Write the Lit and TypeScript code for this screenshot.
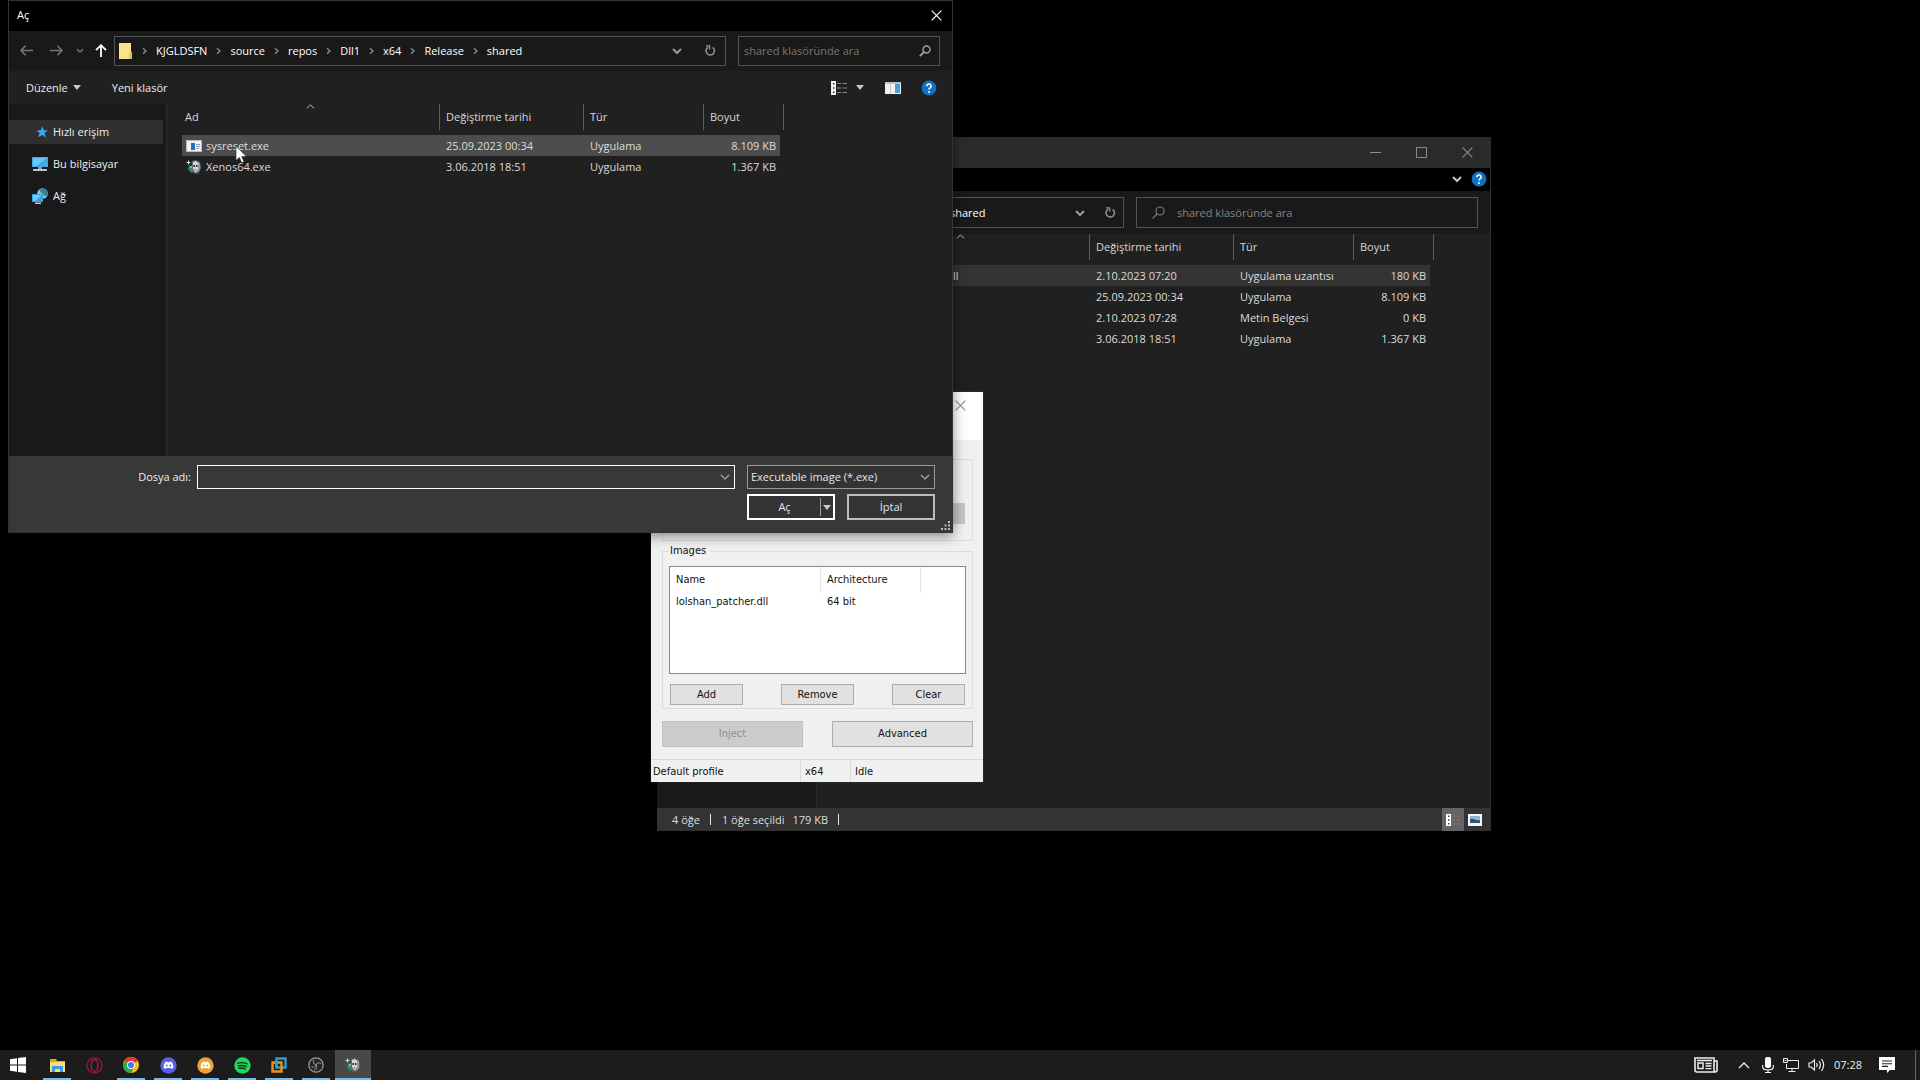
import { LitElement, html, css } from "lit";
import { customElement, property } from "lit/decorators.js";
import { classMap } from "lit/directives/class-map.js";

const base = css`
  * { box-sizing: border-box; }
  :host {
    font-family: "Open Sans", "Noto Sans", sans-serif;
    font-size: 11px;
    line-height: 16px;
    color: #e6e6e6;
  }
  button, input, select { font: inherit; color: inherit; margin: 0; padding: 0; border: 0; background: none; border-radius: 0; }
  svg { display: block; flex: none; }
`;

const chevronDown = html`<svg width="10" height="8" viewBox="0 0 10 8"><path d="M1 2l4 4 4-4" fill="none" stroke="#9a9a9a" stroke-width="2"/></svg>`;
const thinChevron = html`<svg width="10" height="8" viewBox="0 0 10 8"><path d="M1 2l4 4 4-4" fill="none" stroke="#a8a8a8" stroke-width="1.2"/></svg>`;
const crumbSep = html`<svg width="5" height="8" viewBox="0 0 5 8"><path d="M1 1.2l3 2.8-3 2.8" fill="none" stroke="#8a8a8a" stroke-width="1.4"/></svg>`;
const caretDown = html`<svg width="8" height="5" viewBox="0 0 8 5"><path d="M0 0h8L4 5z" fill="#c8c8c8"/></svg>`;
const refresh = html`<svg width="12" height="12" viewBox="0 0 12 12"><path d="M8.6 2.4A4.2 4.2 0 1 1 4 2.3" fill="none" stroke="#8f8f8f" stroke-width="1.6"/><path d="M2 .9h3.6v3.5" fill="none" stroke="#8f8f8f" stroke-width="1.4"/></svg>`;
const help = html`<svg width="16" height="16" viewBox="0 0 16 16"><circle cx="8" cy="8" r="7.4" fill="#1271c4"/><path d="M5.9 6.3a2.1 2.1 0 1 1 3.2 1.6c-.8.5-1.1.8-1.1 1.7" fill="none" stroke="#fff" stroke-width="1.6"/><circle cx="8" cy="11.9" r="1" fill="#fff"/></svg>`;
const close = (color: string) => html`<svg width="11" height="11" viewBox="0 0 11 11"><path d="M.7.7l9.6 9.6M10.3.7L.7 10.3" stroke=${color} stroke-width="1.2"/></svg>`;
const sortCaret = html`<svg width="9" height="5" viewBox="0 0 9 5"><path d="M.8 4.4L4.5.9l3.7 3.5" fill="none" stroke="#8c8c8c" stroke-width="1.1"/></svg>`;

const appIcon = html`<svg width="16" height="14" viewBox="0 0 16 14"><path d="M.5 1.500h15v11H.5z" fill="#f2f2f2" stroke="#b9bfc6"/><path d="M5 4h4v7H5z" fill="#1c70c8"/><path d="M10 5h4v1h-4zM10 7h4v1h-4zM10 9h3v1h-3z" fill="#8f99a8"/></svg>`;
const xenosIcon = html`<svg width="16" height="16" viewBox="0 0 16 16"><path d="M6 2l4-1 4 2 1 6-2 5-4 1-4-3z" fill="#5d6b70"/><path d="M7 3l3-1 2 2v6l-1 3H9L7 10z" fill="#d8d6d2"/><path d="M3 6l3 2 1 5-2 1-3-4z" fill="#338578"/><path d="M.5 3.500h4M2.500 1.500v4M4 8h2" stroke="#cfe9e6"/><path d="M12 3l2 2-.5 6-1.500 1z" fill="#8ea5ae"/><path d="M7.500 6H9v2H7.500zM10 6h1.500v2H10z" fill="#22262b"/><path d="M8.500 10.500h2v1h-2z" fill="#a04552"/></svg>`;
const starIcon = html`<svg width="12" height="12" viewBox="0 0 12 12"><path d="M6.300.3l1.500 3.900 4.100.2-3.300 2.500 1.100 4.500-3.500-2.300-3.800 2.200 1.200-4.200L.5 4.500l4.200-.3z" fill="#39a9ee"/></svg>`;
const pcIcon = html`<svg width="16" height="14" viewBox="0 0 16 14"><path d="M0 0h16v10H0z" fill="#3fa9ea"/><path d="M1 1h14L4 9H1z" fill="#6cc5f6"/><path d="M6 10h4v2H6z" fill="#8d9aa5"/><path d="M1 12h14v2H1z" fill="#b9c4cd"/></svg>`;
const netIcon = html`<svg width="16" height="16" viewBox="0 0 16 16"><circle cx="10.500" cy="5.500" r="5.300" fill="#8fc3d6"/><path d="M7 2c2 1 1 3 3 3s1 3 3 3 2-1 2.600-2A5.300 5.300 0 0 0 12 .5z" fill="#3b7d93"/><path d="M0 6h11v8H0z" fill="#36a0e4"/><path d="M1 7h9l-7 6H1z" fill="#74c9f8"/><path d="M3 14.500h6V16H3z" fill="#c3ced6"/></svg>`;
const folderIcon = html`<svg width="14" height="16" viewBox="0 0 14 16"><path d="M0 0h12v9h1v7H0z" fill="#f9e48b"/><path d="M10 11l2-3 1 2v6h-3z" fill="#dfc05c"/></svg>`;

type FileRow = { icon?: unknown; name: string; date: string; kind: string; size: string; selected?: boolean };

/** Details view shared by the file dialog and the explorer window. */
@customElement("file-table")
export class FileTable extends LitElement {
  @property({ attribute: false }) rows: FileRow[] = [];
  @property({ attribute: false }) columns: number[] = [];
  @property() heading = "Ad";

  static styles = [base, css`
    :host { display: block; }
    table { border-collapse: separate; border-spacing: 0; table-layout: fixed; }
    th { position: relative; height: 26px; padding: 0 6px; text-align: left; font-weight: 400; color: #d8d8d8; border-right: 1px solid #5c5c5c; }
    th:first-child { padding-left: 3px; }
    .sort { position: absolute; top: 0; left: 50%; margin-left: -5px; }
    .gap td { height: 5px; padding: 0; }
    td { height: 21px; padding: 0 6px; white-space: nowrap; color: #dcdcdc; }
    td:first-child { padding-left: 4px; }
    td:last-child { text-align: right; padding-right: 8px; }
    .selected td { background: var(--selected, #4d4d4d); }
    .selected td:last-child { background: linear-gradient(var(--selected, #4d4d4d), var(--selected, #4d4d4d)) 0 0 / calc(100% - 4px) 100% no-repeat; }
    .file { display: flex; align-items: center; gap: 4px; }
    .blank { width: 22px; }
  `];

  render() {
    return html`<table>
      <colgroup>${this.columns.map((w) => html`<col style="width:${w}px">`)}</colgroup>
      <thead><tr>
        <th scope="col">${this.heading}<span class="sort">${sortCaret}</span></th>
        <th scope="col">Değiştirme tarihi</th><th scope="col">Tür</th><th scope="col">Boyut</th>
      </tr></thead>
      <tbody>
        <tr class="gap"><td colspan="4"></td></tr>
        ${this.rows.map((r) => html`<tr class=${classMap({ selected: !!r.selected })}>
          <td><div class="file">${r.icon ?? html`<span class="blank"></span>`}<span>${r.name}</span></div></td>
          <td>${r.date}</td><td>${r.kind}</td><td>${r.size}</td>
        </tr>`)}
      </tbody>
    </table>`;
  }
}

@customElement("explorer-window")
export class ExplorerWindow extends LitElement {
  rows: FileRow[] = [
    { name: "lolshan_patcher.dll", date: "2.10.2023 07:20", kind: "Uygulama uzantısı", size: "180 KB", selected: true },
    { name: "", date: "25.09.2023 00:34", kind: "Uygulama", size: "8.109 KB" },
    { name: "", date: "2.10.2023 07:28", kind: "Metin Belgesi", size: "0 KB" },
    { name: "", date: "3.06.2018 18:51", kind: "Uygulama", size: "1.367 KB" },
  ];

  static styles = [base, css`
    :host { display: flex; flex-direction: column; background: #202020; border-right: 1px solid #2c2c2c; }
    .title { height: 31px; background: #2b2b2b; display: flex; justify-content: flex-end; }
    .title button { width: 46px; display: grid; place-items: center; }
    .ribbon { height: 23px; background: #000; display: flex; align-items: center; justify-content: flex-end; gap: 9px; padding: 0 3px 2px 0; }
    .nav { height: 43px; background: #191919; display: flex; align-items: center; gap: 12px; padding: 0 12px 0 120px; }
    .address { flex: 1; height: 31px; border: 1px solid #535353; display: flex; align-items: center; gap: 19px; padding: 0 7px 0 172px; color: #fff; }
    .address span { flex: 1; }
    .search { width: 342px; height: 31px; border: 1px solid #535353; display: flex; align-items: center; gap: 12px; padding-left: 15px; }
    .search input { flex: 1; min-width: 0; outline: 0; }
    .search input::placeholder { color: #858585; opacity: 1; }
    .main { flex: 1; display: flex; min-height: 0; }
    .side { width: 160px; background: #191919; border-right: 1px solid #2b2b2b; }
    file-table { margin-left: 15px; --selected: #333; }
    .status { height: 23px; background: #333; display: flex; align-items: center; padding-left: 15px; color: #dedede; }
    .bar { width: 1px; height: 11px; background: #e8e8e8; margin: 0 11px 0 10px; }
    .size { margin-left: 8px; }
    .views { margin-left: auto; display: flex; padding-right: 4px; }
    .views button { width: 22px; height: 23px; display: grid; place-items: center; }
    .views .on { background: #646464; }
  `];

  render() {
    return html`
      <div class="title">
        <button aria-label="Simge durumuna küçült"><svg width="11" height="11" viewBox="0 0 11 11"><path d="M0 5.500h11" stroke="#8c8c8c"/></svg></button>
        <button aria-label="Ekranı kapla"><svg width="11" height="11" viewBox="0 0 11 11"><path d="M.5.5h10v10H.5z" fill="none" stroke="#8c8c8c"/></svg></button>
        <button aria-label="Kapat">${close("#8c8c8c")}</button>
      </div>
      <div class="ribbon"><button aria-label="Şeridi genişlet"><svg width="10" height="8" viewBox="0 0 10 8"><path d="M1 2l4 4 4-4" fill="none" stroke="#c4c4c4" stroke-width="2"/></svg></button><button aria-label="Yardım">${help}</button></div>
      <div class="nav">
        <div class="address"><span>shared</span><button aria-label="Önceki konumlar">${chevronDown}</button><button aria-label="Yenile">${refresh}</button></div>
        <label class="search"><svg width="13" height="13" viewBox="0 0 13 13"><circle cx="8" cy="5" r="4" fill="none" stroke="#7d7d7d" stroke-width="1.1"/><path d="M5 8l-4.400 4.400" stroke="#7d7d7d" stroke-width="1.1"/></svg><input aria-label="Ara" placeholder="shared klasöründe ara"></label>
      </div>
      <div class="main"><div class="side"></div><file-table heading="" .rows=${this.rows} .columns=${[258, 144, 120, 80]}></file-table></div>
      <div class="status">
        <span>4 öğe</span><span class="bar"></span><span>1 öğe seçildi</span><span class="size">179 KB</span><span class="bar"></span>
        <div class="views">
          <button class="on" aria-label="Ayrıntılar"><svg width="14" height="14" viewBox="0 0 14 14"><path d="M0 1h5v12H0z" fill="#fff"/><path d="M2 2.500h1.500V4H2zM2 6.200h1.500v1.500H2zM2 10h1.500v1.500H2z" fill="#444"/><path d="M6 3h3M10.500 3H14M6 7h3M10.500 7H14M6 11h3M10.500 11H14" stroke="#7c7c7c"/></svg></button>
          <button aria-label="Büyük simgeler"><svg width="14" height="12" viewBox="0 0 14 12"><path d="M0 0h14v12H0z" fill="#f6f6f6"/><path d="M2 2h10v7H2z" fill="#8fb7d8"/><path d="M2 5c4-1 6 2 10 1v3H2z" fill="#31536e"/></svg></button>
        </div>
      </div>`;
  }
}

@customElement("injector-window")
export class InjectorWindow extends LitElement {
  static styles = [base, css`
    :host { display: flex; flex-direction: column; background: #f0f0f0; color: #111; font-family: "DejaVu Sans Condensed", "Noto Sans", sans-serif; font-size: 11px; line-height: 14px; box-shadow: 0 0 1px #555; }
    .title { height: 48px; background: #fff; display: flex; justify-content: flex-end; align-items: flex-start; padding: 8px 17px; }
    .body { flex: 1; padding: 19px 10px 0 11px; display: flex; flex-direction: column; }
    .process { height: 82px; border: 1px solid #dcdcdc; display: flex; justify-content: flex-end; align-items: flex-end; padding: 0 7px 16px; }
    .process button { width: 73px; height: 21px; background: #c6c6c6; }
    fieldset { margin: 3px 0 0; padding: 8px 6px 3px; border: 1px solid #dcdcdc; min-width: 0; }
    legend { padding: 0 4px 0 1px; }
    .list { height: 108px; background: #fff; border: 1px solid #828790; }
    table { border-spacing: 0; table-layout: fixed; }
    th { height: 26px; text-align: left; font-weight: 400; padding: 0 6px; border-right: 1px solid #e5e5e5; }
    td { height: 17px; padding: 0 6px; }
    .c1 { width: 151px; } .c2 { width: 100px; }
    .buttons { display: flex; justify-content: space-between; padding: 10px 1px 0; }
    .btn { width: 73px; height: 21px; background: #e1e1e1; border: 1px solid #adadad; }
    .wide { display: flex; justify-content: space-between; margin-top: 12px; }
    .wide .btn { width: 141px; height: 26px; }
    .wide .btn:disabled { background: #ccc; border-color: #c2c2c2; color: #8c8c8c; }
    .status { height: 23px; border-top: 1px solid #d9d9d9; display: flex; line-height: 24px; }
    .status span { padding-left: 4px; border-right: 1px solid #dadada; }
    .profile { width: 150px; } .status .profile { padding-left: 2px; } .arch { width: 50px; } .status .state { flex: 1; border: 0; }
  `];

  render() {
    return html`
      <div class="title"><button aria-label="Close">${close("#8d8d8d")}</button></div>
      <div class="body">
        <div class="process"><button disabled aria-label="Process"></button></div>
        <fieldset><legend>Images</legend>
          <div class="list"><table>
            <colgroup><col class="c1"><col class="c2"></colgroup>
            <thead><tr><th scope="col">Name</th><th scope="col">Architecture</th></tr></thead>
            <tbody><tr><td>lolshan_patcher.dll</td><td>64 bit</td></tr></tbody>
          </table></div>
          <div class="buttons"><button class="btn">Add</button><button class="btn">Remove</button><button class="btn">Clear</button></div>
        </fieldset>
        <div class="wide"><button class="btn" disabled>Inject</button><button class="btn">Advanced</button></div>
      </div>
      <div class="status"><span class="profile">Default profile</span><span class="arch">x64</span><span class="state">Idle</span></div>`;
  }
}

@customElement("open-dialog")
export class OpenDialog extends LitElement {
  crumbs = ["KJGLDSFN", "source", "repos", "Dll1", "x64", "Release", "shared"];
  rows: FileRow[] = [
    { icon: appIcon, name: "sysreset.exe", date: "25.09.2023 00:34", kind: "Uygulama", size: "8.109 KB", selected: true },
    { icon: xenosIcon, name: "Xenos64.exe", date: "3.06.2018 18:51", kind: "Uygulama", size: "1.367 KB" },
  ];

  static styles = [base, css`
    :host { display: flex; flex-direction: column; background: #202020; border: 1px solid #333; box-shadow: 0 3px 12px rgba(0, 0, 0, 0.45); }
    .title { height: 30px; background: #000; display: flex; align-items: center; justify-content: space-between; padding: 0 10px 2px 8px; color: #fff; }
    .nav { height: 40px; background: #191919; display: flex; align-items: center; padding: 0 12px 1px 11px; }
    .arrows { display: flex; align-items: center; width: 94px; }
    .arrows button:nth-child(2) { margin-left: 17px; }
    .arrows button:nth-child(3) { margin-left: 13px; }
    .arrows button:nth-child(4) { margin-left: 11px; }
    .address { flex: 1; height: 30px; border: 1px solid #535353; display: flex; align-items: center; padding: 0 9px 0 4px; color: #fff; }
    .crumbs { display: flex; align-items: center; gap: 9px; flex: 1; padding-left: 9px; }
    .crumbs button { white-space: nowrap; }
    .address .tools { display: flex; gap: 22px; }
    .search { width: 202px; margin-left: 12px; height: 30px; border: 1px solid #535353; display: flex; align-items: center; padding: 0 8px 0 5px; }
    .search input { flex: 1; min-width: 0; outline: 0; }
    .search input::placeholder { color: #777; opacity: 1; }
    .bar { height: 33px; display: flex; align-items: center; padding: 0 15px 0 17px; color: #eee; }
    .bar button { display: flex; align-items: center; gap: 5px; }
    .new { margin-left: 31px; }
    .right { margin-left: auto; display: flex; align-items: center; gap: 20px; }
    .right button:first-child { gap: 9px; margin-right: 1px; }
    .main { flex: 1; display: flex; min-height: 0; }
    .side { width: 158px; background: #191919; border-right: 1px solid #2d2d2d; padding: 16px 3px 0 0; display: flex; flex-direction: column; gap: 8px; }
    .side a { height: 24px; display: flex; align-items: center; gap: 5px; padding-left: 23px; color: #eee; text-decoration: none; }
    .side .on { background: #2f2f2f; }
    .slot { width: 16px; display: flex; justify-content: flex-end; }
    file-table { margin-left: 15px; }
    .foot { height: 76px; background: #383838; display: grid; grid-template-columns: 188px 538px 188px; row-gap: 5px; padding: 9px 0 0; align-content: start; position: relative; }
    .foot label { text-align: right; padding-right: 6px; line-height: 24px; color: #eee; }
    .name { height: 24px; border: 1px solid #fff; display: flex; align-items: center; padding: 0 4px; }
    .name input { flex: 1; outline: 0; }
    .type { margin-left: 12px; width: 188px; height: 24px; border: 1px solid #9a9a9a; background: #333; display: flex; align-items: center; padding-right: 4px; }
    .type select { flex: 1; appearance: none; outline: 0; padding-left: 3px; height: 22px; }
    .actions { grid-column: 3; margin-left: 12px; width: 188px; display: flex; justify-content: space-between; }
    .btn { height: 26px; width: 88px; background: #333; border: 2px solid #fff; display: flex; align-items: center; justify-content: center; }
    .cancel { border-color: #bdbdbd; }
    .split { width: 88px; height: 26px; border: 2px solid #fff; background: #333; display: flex; align-items: center; }
    .split .go { flex: 1; }
    .split .more { width: 13px; height: 18px; border-left: 1px solid #9a9a9a; display: flex; align-items: center; justify-content: flex-end; padding-right: 2px; }
    .grip { position: absolute; right: 1px; bottom: 1px; }
  `];

  render() {
    return html`
      <div class="title"><span>Aç</span><button aria-label="Kapat">${close("#fff")}</button></div>
      <div class="nav">
        <div class="arrows">
          <button aria-label="Geri"><svg width="13" height="11" viewBox="0 0 13 11"><path d="M5.500.8L1 5.500l4.500 4.700M1 5.500h12" fill="none" stroke="#777" stroke-width="1.600"/></svg></button>
          <button aria-label="İleri"><svg width="13" height="11" viewBox="0 0 13 11"><path d="M7.500.8L12 5.500l-4.500 4.700M12 5.500H0" fill="none" stroke="#777" stroke-width="1.600"/></svg></button>
          <button aria-label="Son konumlar"><svg width="8" height="6" viewBox="0 0 8 6"><path d="M1 1l3 3 3-3" fill="none" stroke="#777" stroke-width="1.500"/></svg></button>
          <button aria-label="Yukarı"><svg width="12" height="13" viewBox="0 0 12 13"><path d="M1 6.200L6 1.200l5 5M6 1.200V13" fill="none" stroke="#fff" stroke-width="1.800"/></svg></button>
        </div>
        <div class="address">${folderIcon}
          <div class="crumbs">${this.crumbs.map((c) => html`${crumbSep}<button>${c}</button>`)}</div>
          <div class="tools"><button aria-label="Önceki konumlar">${chevronDown}</button><button aria-label="Yenile">${refresh}</button></div>
        </div>
        <label class="search"><input aria-label="Ara" placeholder="shared klasöründe ara"><svg width="12" height="12" viewBox="0 0 12 12"><circle cx="7.500" cy="4.500" r="3.500" fill="none" stroke="#a0a0a0" stroke-width="1.500"/><path d="M5 7L.8 11.200" stroke="#a0a0a0" stroke-width="1.800"/></svg></label>
      </div>
      <div class="bar">
        <button>Düzenle ${caretDown}</button><button class="new">Yeni klasör</button>
        <div class="right">
          <button aria-label="Görünüm"><svg width="16" height="14" viewBox="0 0 16 14"><path d="M0 0h5v14H0z" fill="#f0f0f0"/><path d="M2 2h1.500v1.500H2zM2 6.200h1.500v1.500H2zM2 10.500h1.500V12H2z" fill="#333"/><path d="M6 2.500h4M11.500 2.500H16M6 7h4M11.500 7H16M6 11.500h4M11.500 11.500H16" stroke="#858585"/></svg>${caretDown}</button>
          <button aria-label="Önizleme"><svg width="16" height="12" viewBox="0 0 16 12"><path d="M0 0h16v12H0z" fill="#f2f2f2"/><path d="M0 0h16v2H0z" fill="#b8c4ce"/><path d="M10 2h5v9h-5z" fill="#4ba0dc"/><path d="M5 2h1v10H5z" fill="#c8c8c8"/></svg></button>
          <button aria-label="Yardım">${help}</button>
        </div>
      </div>
      <div class="main">
        <nav class="side">
          <a href="#" class="on"><span class="slot">${starIcon}</span>Hızlı erişim</a>
          <a href="#"><span class="slot">${pcIcon}</span>Bu bilgisayar</a>
          <a href="#"><span class="slot">${netIcon}</span>Ağ</a>
        </nav>
        <file-table .rows=${this.rows} .columns=${[258, 144, 120, 80]}></file-table>
      </div>
      <div class="foot">
        <label for="fname">Dosya adı:</label>
        <div class="name"><input id="fname" type="text">${thinChevron}</div>
        <div class="type"><select aria-label="Dosya türü"><option>Executable image (*.exe)</option></select>${thinChevron}</div>
        <div class="actions">
          <div class="split"><button class="go">Aç</button><button class="more" aria-label="Diğer seçenekler">${caretDown}</button></div>
          <button class="btn cancel">İptal</button>
        </div>
        <svg class="grip" width="10" height="10" viewBox="0 0 10 10"><path d="M7 0h2v2H7zM7 3.500h2v2H7zM7 7h2v2H7zM3.500 3.500h2v2h-2zM3.500 7h2v2h-2zM0 7h2v2H0z" fill="#bdbdbd"/></svg>
      </div>`;
  }
}

const discord = (bg: string) => html`<svg width="17" height="17" viewBox="0 0 17 17"><circle cx="8.500" cy="8.500" r="8.200" fill=${bg}/><path d="M5 5.400c1-.7 1.700-.8 2.300-.8l.3.600h1.800l.3-.6c.6 0 1.300.1 2.300.8 1 1.700 1.500 3.500 1.300 5.300-.8.600-1.500.9-2.300 1l-.6-1c-1.200.4-2.600.4-3.800 0l-.6 1c-.8-.1-1.500-.4-2.300-1-.2-1.800.3-3.600 1.300-5.300z" fill="#fff"/><ellipse cx="6.700" cy="8.500" rx="1" ry="1.100" fill=${bg}/><ellipse cx="10.300" cy="8.500" rx="1" ry="1.100" fill=${bg}/></svg>`;

@customElement("task-bar")
export class TaskBar extends LitElement {
  apps = [
    { name: "Dosya Gezgini", run: true, icon: html`<svg width="17" height="15" viewBox="0 0 17 15"><path d="M1 1h6l1 2h8v11H1z" fill="#d9a62f"/><path d="M1 4h15v10H1z" fill="#fbdc7b"/><path d="M3 8h11v6h-3v-3H6v3H3z" fill="#3c9ce0"/></svg>` },
    { name: "Opera GX", run: false, icon: html`<svg width="17" height="17" viewBox="0 0 17 17"><circle cx="8.500" cy="8.500" r="7.500" fill="none" stroke="#8e1736" stroke-width="1.500"/><ellipse cx="8.500" cy="8.500" rx="3.500" ry="5.800" fill="none" stroke="#a01a3c" stroke-width="1.500"/></svg>` },
    { name: "Chrome", run: true, icon: html`<svg width="16" height="16" viewBox="0 0 16 16"><circle cx="8" cy="8" r="8" fill="#fbc116"/><path d="M8 8L1.070 4A8 8 0 0 1 14.930 4z" fill="#e33b2e"/><path d="M8 8L1.070 4A8 8 0 0 0 8 16l3.500-6z" fill="#2da94f"/><circle cx="8" cy="8" r="4" fill="#fff"/><circle cx="8" cy="8" r="3.100" fill="#3f7df0"/></svg>` },
    { name: "Discord", run: true, icon: discord("#5661e8") },
    { name: "Discord Canary", run: true, icon: discord("#f2a234") },
    { name: "Spotify", run: true, icon: html`<svg width="17" height="17" viewBox="0 0 17 17"><circle cx="8.500" cy="8.500" r="8.200" fill="#20d760"/><path d="M3.800 6.200c3-.9 6.500-.7 9.400.8M4.300 8.900c2.700-.8 5.500-.5 8 .8M4.800 11.300c2.200-.6 4.500-.3 6.500.8" fill="none" stroke="#12331d" stroke-width="1.400" stroke-linecap="round"/></svg>` },
    { name: "VMware", run: true, icon: html`<svg width="16" height="16" viewBox="0 0 16 16"><path d="M5.500 1.500h9v9h-9z" fill="none" stroke="#2f9fd0" stroke-width="2.400"/><path d="M1.500 5.500h9v9h-9z" fill="none" stroke="#ea9320" stroke-width="2.400"/><path d="M5.500 4v6.500" fill="none" stroke="#2f9fd0" stroke-width="2.400"/></svg>` },
    { name: "OBS", run: true, icon: html`<svg width="16" height="16" viewBox="0 0 16 16"><circle cx="8" cy="8" r="7.200" fill="#252525" stroke="#a0a0a0" stroke-width="1.200"/><path d="M5.800 3c-1 2 0 4.300 2.200 5M13 6.500c-1.900-1.300-4.400-.8-5 1.500M6 13c2.200 0 3.600-2.600 2-5M3.500 9.500C5 11 7.500 10.400 8 8" fill="none" stroke="#a0a0a0" stroke-width="1"/></svg>` },
    { name: "Xenos", run: true, active: true, icon: xenosIcon },
  ];

  static styles = [base, css`
    :host { display: flex; align-items: stretch; background: #1c1c1c; color: #eee; }
    .start { width: 36px; display: grid; place-items: center; }
    .apps { display: flex; gap: 1px; padding-left: 3px; }
    .app { width: 36px; position: relative; display: grid; place-items: center; }
    .app.run::after { content: ""; position: absolute; left: 4px; right: 4px; bottom: 0; height: 2px; background: #76b9ed; }
    .app.active { background: #484848; }
    .app.active::after { left: 0; right: 0; }
    .tray { margin-left: auto; display: flex; align-items: center; }
    .tray button { display: block; }
    .news { margin-right: 20px; }
    .status { display: flex; align-items: center; gap: 9px; }
    .status button:nth-child(2) { margin-left: 3px; }
    .clock { margin-left: 9px; }
    .notes { margin-left: 17px; }
    .tray .show { align-self: stretch; margin-left: 20px; width: 5px; border-left: 1px solid #666; }
  `];

  render() {
    return html`
      <button class="start" aria-label="Başlat"><svg width="16" height="16" viewBox="0 0 16 16"><path d="M0 2.200l7-1v6.300H0zM8 1.100L16 0v7.500H8zM0 8.500h7v6.300l-7-1zM8 8.500h8V16l-8-1.100z" fill="#fff"/></svg></button>
      <div class="apps">${this.apps.map((a) => html`<button class=${classMap({ app: true, run: a.run, active: !!a.active })} aria-label=${a.name}>${a.icon}</button>`)}</div>
      <div class="tray">
        <button class="news" aria-label="Haberler"><svg width="24" height="16" viewBox="0 0 24 16"><path d="M1 1h19v14H3c-1.500 0-2-1-2-2zM20 4h3v9c0 1.500-1 2-2 2h-3" fill="none" stroke="#eee" stroke-width="1.600"/><path d="M4 6h5v5.500H4z" fill="none" stroke="#eee" stroke-width="1.500"/><path d="M3 3.500h15M11.500 6.500h6M11.500 9h6M11.500 11.700h6" stroke="#eee" stroke-width="1.300"/></svg></button>
        <div class="status">
          <button aria-label="Gizli simgeler"><svg width="12" height="8" viewBox="0 0 12 8"><path d="M1 7l5-5 5 5" fill="none" stroke="#eee" stroke-width="1.400"/></svg></button>
          <button aria-label="Mikrofon"><svg width="12" height="16" viewBox="0 0 12 16"><rect x="3" y="0" width="6" height="11" rx="2" fill="#fff"/><path d="M.7 8v1.500c0 2 1.500 3.300 3.300 3.300h4c1.800 0 3.300-1.300 3.300-3.300V8M6 13v3M3 15.500h6" fill="none" stroke="#fff" stroke-width="1.100"/></svg></button>
          <button aria-label="Ağ"><svg width="16" height="14" viewBox="0 0 16 14"><path d="M5 2.500h10.500v8H3.500V6M9 10.500v3M5.500 13.500h7" fill="none" stroke="#eee"/><path d="M.5.500h4v4h-4zM1.500 2.500h2" fill="none" stroke="#eee"/></svg></button>
          <button aria-label="Ses"><svg width="17" height="14" viewBox="0 0 17 14"><path d="M1 5h2l3.500-3v10L3 9H1z" fill="none" stroke="#eee" stroke-width="1.100"/><path d="M8.500 5c.8 1.200.8 2.800 0 4M11 3c1.700 2.400 1.700 5.600 0 8M13.500 1c2.600 3.600 2.600 8.400 0 12" fill="none" stroke="#eee" stroke-width="1.200"/></svg></button>
        </div>
        <time class="clock">07:28</time>
        <button class="notes" aria-label="Bildirimler"><svg width="16" height="16" viewBox="0 0 16 16"><path d="M0 0h16v13h-5l-3 3v-3H0z" fill="#fff"/><path d="M3 4h10M3 6.700h10M3 9.400h6" stroke="#222" stroke-width="1.100"/></svg></button>
        <button class="show" aria-label="Masaüstünü göster"></button>
      </div>`;
  }
}

@customElement("app-root")
export class AppRoot extends LitElement {
  static styles = [base, css`
    :host { display: flex; flex-direction: column; min-height: 100vh; background: #000; }
    .desktop { flex: 1; position: relative; overflow: hidden; }
    explorer-window { position: absolute; left: 657px; top: 137px; width: 834px; height: 694px; }
    injector-window { position: absolute; left: 651px; top: 392px; width: 332px; height: 390px; }
    open-dialog { position: absolute; left: 8px; top: 0; width: 945px; height: 533px; }
    .pointer { position: absolute; left: 235px; top: 145px; }
    task-bar { height: 30px; }
  `];

  render() {
    return html`
      <main class="desktop">
        <explorer-window></explorer-window>
        <injector-window></injector-window>
        <open-dialog></open-dialog>
        <svg class="pointer" width="13" height="19" viewBox="0 0 13 19"><path d="M1 1v14.500l3.300-3.100 2.400 5.400 2.400-1-2.400-5.200h4.600z" fill="#fff" stroke="#333" stroke-width=".7"/></svg>
      </main>
      <task-bar></task-bar>`;
  }
}
